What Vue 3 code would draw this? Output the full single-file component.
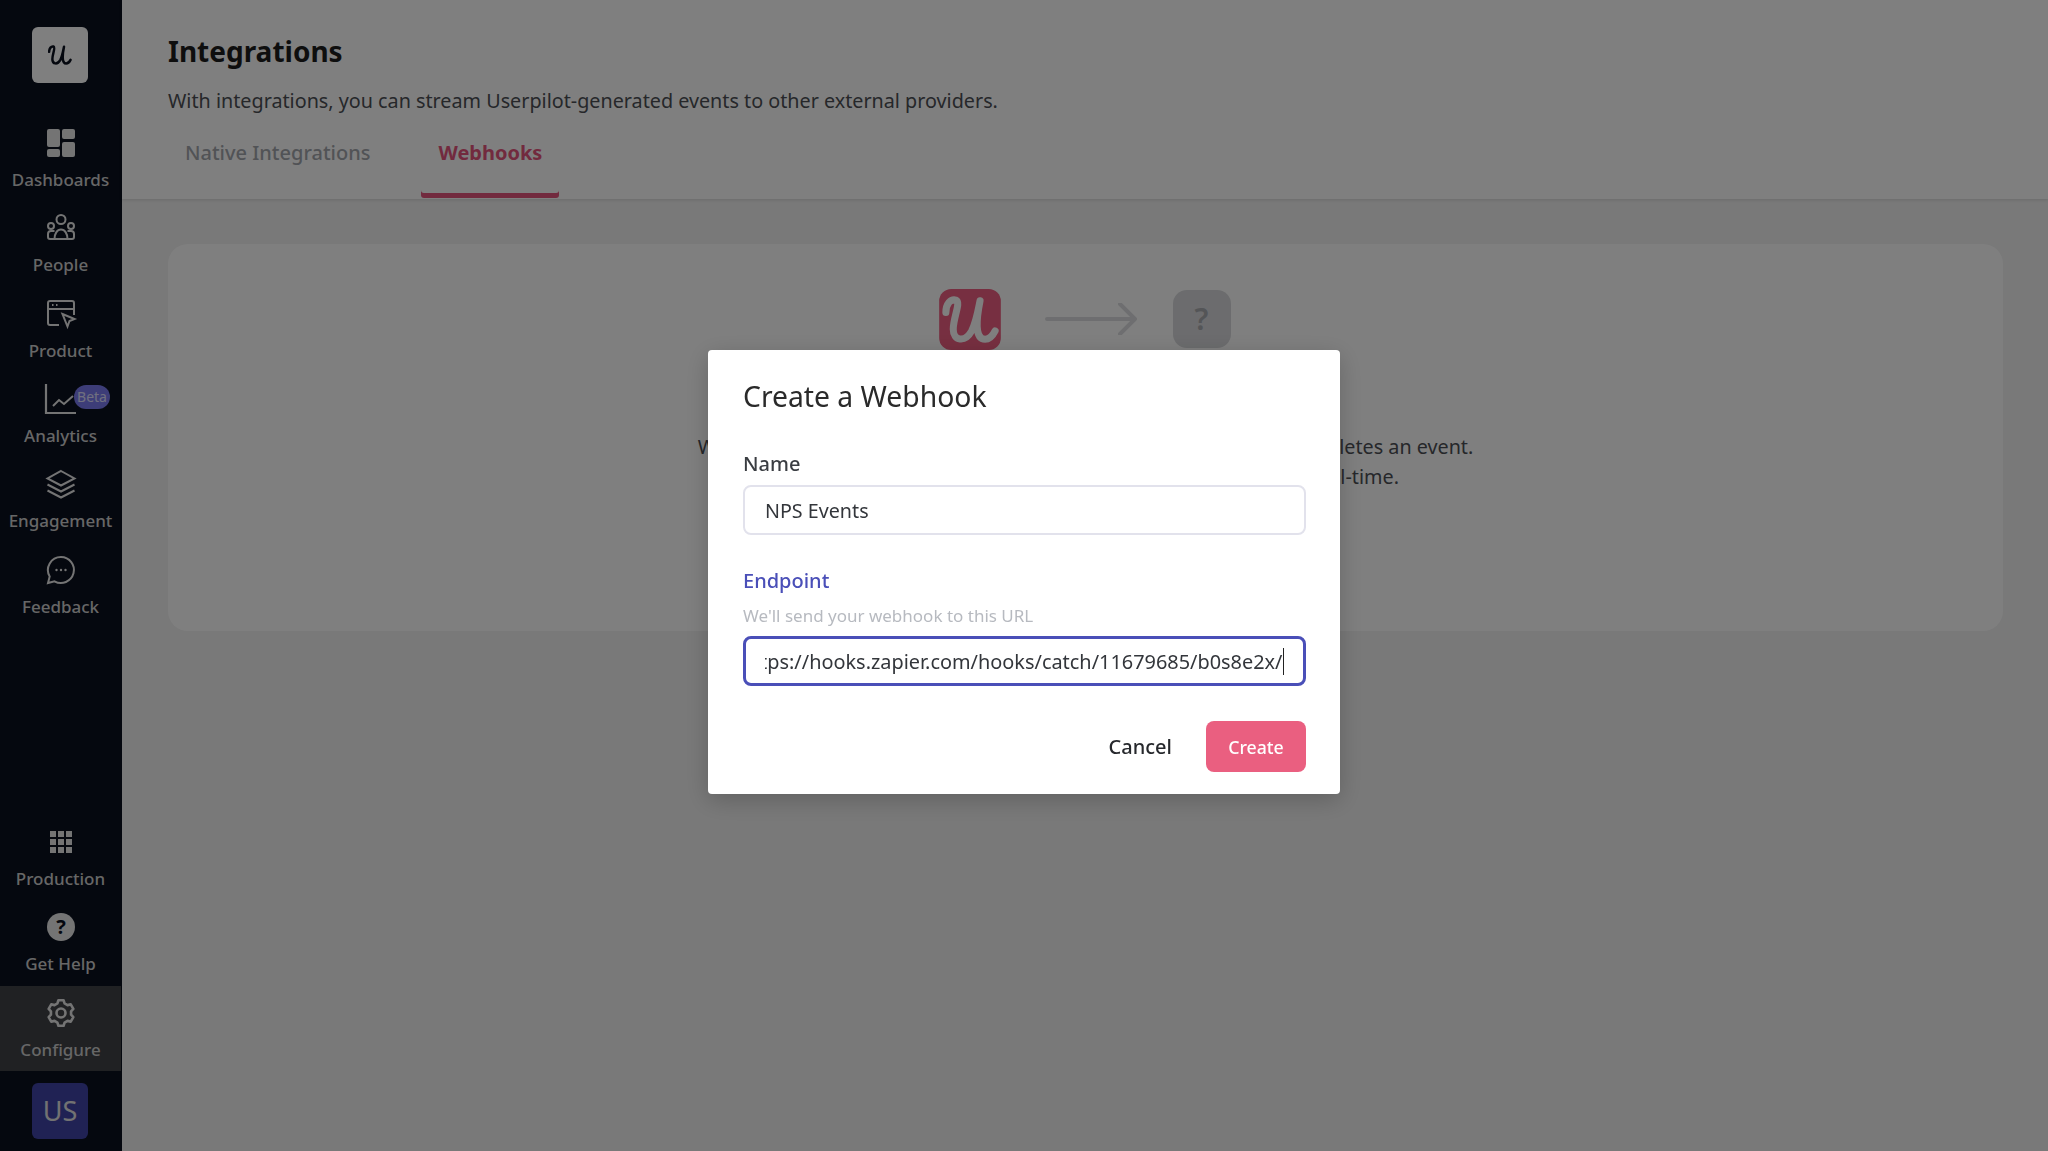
<script setup>
const uPath = 'M48 85 C48 60 62 44 78 48 C94 54 70 100 70 135 C70 170 105 176 125 140 C138 115 144 80 150 50 C140 100 132 165 165 165 C180 165 190 150 195 140'

function gearPath() {
  const pts = []
  for (let k = 0; k < 6; k++) {
    const a = (-90 + k * 60) * Math.PI / 180
    for (const [r, d] of [[10.2, -0.36], [13, -0.2], [13, 0.2], [10.2, 0.36]]) {
      pts.push((14 + r * Math.cos(a + d)).toFixed(2) + ' ' + (14 + r * Math.sin(a + d)).toFixed(2))
    }
  }
  return 'M' + pts.join('L') + 'Z'
}

const topItems = [
  {
    label: 'Dashboards',
    icon: '<g fill="currentColor" stroke="none"><rect x="0" y="0" width="13" height="18" rx="2"/><rect x="0" y="20" width="13" height="8" rx="2"/><rect x="15" y="0" width="13" height="10" rx="2"/><rect x="15" y="13" width="13" height="15" rx="2"/></g>'
  },
  {
    label: 'People',
    icon: '<circle cx="14" cy="5.5" r="4.5"/><circle cx="4" cy="12" r="3"/><circle cx="24" cy="12" r="3"/><path d="M7.5 25C7.5 20 10 15.5 14 15.5S20.500 20 20.500 25Z"/><path d="M7.500 17H4Q1 17 1 20V23Q1 25 3 25H25Q27 25 27 23V20Q27 17 24 17H20.500"/>'
  },
  {
    label: 'Product',
    icon: '<path d="M12 25H3Q1 25 1 23V3Q1 1 3 1H25Q27 1 27 3V15"/><path d="M1 9H27"/><path d="M5 5H6.500M9 5H10.500"/><path d="M15.500 14L27.500 19L22.500 21L20.500 26.500Z"/>'
  },
  {
    label: 'Analytics',
    badge: 'Beta',
    icon: '<path d="M-1 -1V28H29" stroke-width="2.200"/><path d="M6 21L12 15L17 19L26 11"/>'
  },
  {
    label: 'Engagement',
    icon: '<path d="M14 1L27.500 8.500L14 15.500L0.500 8.500Z"/><path d="M0.500 14.500L14 21.500L27.500 14.500"/><path d="M0.500 20.500L14 27.500L27.500 20.500"/>'
  },
  {
    label: 'Feedback',
    icon: '<path d="M14 1A13 13 0 1 1 7.500 25.300L1 27L2.700 20.500A13 13 0 0 1 14 1Z"/><g fill="currentColor" stroke="none"><circle cx="9.500" cy="14" r="1.200"/><circle cx="14" cy="14" r="1.200"/><circle cx="18.500" cy="14" r="1.200"/></g>'
  }
]

const bottomItems = [
  {
    label: 'Production',
    icon: '<g fill="currentColor" stroke="none"><rect x="3" y="3" width="6" height="6"/><rect x="11" y="3" width="6" height="6"/><rect x="19" y="3" width="6" height="6"/><rect x="3" y="11" width="6" height="6"/><rect x="11" y="11" width="6" height="6"/><rect x="19" y="11" width="6" height="6"/><rect x="3" y="19" width="6" height="6"/><rect x="11" y="19" width="6" height="6"/><rect x="19" y="19" width="6" height="6"/></g>'
  },
  {
    label: 'Get Help',
    icon: '<circle cx="14" cy="14" r="14" fill="currentColor" stroke="none"/><text x="14" y="21" text-anchor="middle" font-size="20" font-weight="700" fill="#0a101e" stroke="none" font-family="Noto Sans, sans-serif">?</text>'
  },
  {
    label: 'Configure',
    active: true,
    icon: '<path d="' + gearPath() + '" stroke-linejoin="round" stroke-width="2.600"/><circle cx="14" cy="14" r="4.500" stroke-width="2.600"/>'
  }
]
</script>

<template>
  <div class="page">
    <aside class="sidebar">
      <div class="logo">
        <svg width="24" height="21" viewBox="40 40 165 140">
          <path :d="uPath" fill="none" stroke="#0a101e" stroke-width="17" stroke-linecap="round" stroke-linejoin="round" />
        </svg>
      </div>
      <a v-for="item in topItems" :key="item.label" class="nav-item">
        <svg class="nav-icon" viewBox="0 0 28 28" fill="none" stroke="currentColor" stroke-width="2" v-html="item.icon"></svg>
        <span class="nav-label">{{ item.label }}</span>
        <span v-if="item.badge" class="badge">{{ item.badge }}</span>
      </a>
      <div class="sidebar-bottom">
        <a v-for="item in bottomItems" :key="item.label" class="nav-item" :class="{ active: item.active }">
          <svg class="nav-icon" viewBox="0 0 28 28" fill="none" stroke="currentColor" stroke-width="2" v-html="item.icon"></svg>
          <span class="nav-label">{{ item.label }}</span>
        </a>
        <div class="avatar">US</div>
      </div>
    </aside>

    <main class="content">
      <header class="header">
        <h1>Integrations</h1>
        <p>With integrations, you can stream Userpilot-generated events to other external providers.</p>
        <nav class="tabs">
          <a class="tab">Native Integrations</a>
          <a class="tab selected">Webhooks</a>
        </nav>
      </header>

      <section class="card">
        <div class="flow">
          <svg class="flow-logo" viewBox="28 15 184 182">
            <rect x="28" y="15" width="184" height="182" rx="36" fill="#ee5f82" />
            <path :d="uPath" fill="none" stroke="#fff" stroke-width="21" stroke-linecap="round" stroke-linejoin="round" />
          </svg>
          <svg class="flow-arrow" viewBox="0 0 92 32" fill="none" stroke="#dcdde0" stroke-width="4" stroke-linecap="round" stroke-linejoin="round">
            <path d="M2 16H90M75 1L90 16L75 31" />
          </svg>
          <div class="unknown">?</div>
        </div>
        <p class="card-text">Webhooks send data to your external services each time a user completes an event.<br />Your endpoint will receive the event details and its data in real-time.</p>
      </section>
    </main>

    <div class="overlay">
      <div class="modal">
        <h2>Create a Webhook</h2>
        <label class="field-label first">Name</label>
        <div class="input">NPS Events</div>
        <label class="field-label focused">Endpoint</label>
        <div class="hint">We'll send your webhook to this URL</div>
        <div class="input focus">
          <div class="input-clip">
            <span class="url">https://hooks.zapier.com/hooks/catch/11679685/b0s8e2x/</span>
            <span class="caret"></span>
          </div>
        </div>
        <div class="actions">
          <button class="cancel">Cancel</button>
          <button class="create">Create</button>
        </div>
      </div>
    </div>
  </div>
</template>

<style scoped>
.page {
  display: flex;
  min-height: 1151px;
  background: #f2f2f2;
  font-family: "Noto Sans", "Open Sans", sans-serif;
  color: #222;
}

.sidebar {
  width: 122px;
  height: 1151px;
  flex: none;
  display: flex;
  flex-direction: column;
  background: #0a101e;
  padding-top: 27px;
  box-sizing: border-box;
}

.logo {
  width: 56px;
  height: 56px;
  margin: 0 0 33px 32px;
  border-radius: 6px;
  background: #fff;
  display: flex;
  align-items: center;
  justify-content: center;
}

.nav-item {
  position: relative;
  height: 85.33px;
  width: 121px;
  flex: none;
  display: flex;
  flex-direction: column;
  align-items: center;
  padding-top: 13px;
  box-sizing: border-box;
  color: #e8e8e8;
}

.nav-item.active {
  background: #404347;
}

.nav-icon {
  width: 28px;
  height: 28px;
  overflow: visible;
}

.nav-label {
  margin-top: 10px;
  font-size: 17px;
  line-height: 26px;
  font-weight: 500;
  white-space: nowrap;
  color: #cfcfcf;
}

.badge {
  position: absolute;
  left: 74px;
  top: 13px;
  width: 36px;
  height: 24px;
  border-radius: 12px;
  background: #7a7af0;
  color: #e0e0ff;
  font-size: 14px;
  line-height: 24px;
  text-align: center;
}

.sidebar-bottom {
  margin-top: auto;
  display: flex;
  flex-direction: column;
  padding-bottom: 12px;
}

.avatar {
  width: 56px;
  height: 56px;
  margin: 12px 0 0 32px;
  border-radius: 6px;
  background: #4045a8;
  color: #e4e4e4;
  font-size: 27px;
  line-height: 56px;
  text-align: center;
}

.content {
  flex: 1;
  min-width: 0;
}

.header {
  height: 199px;
  box-sizing: border-box;
  padding: 30px 0 0 46px;
  background: #fff;
  box-shadow: 0 1px 3px rgba(0, 0, 0, 0.12);
}

h1 {
  margin: 0;
  font-size: 28px;
  line-height: 42px;
  font-weight: 700;
  color: #1d1d1d;
}

.header p {
  margin: 14px 0 0;
  font-size: 19.75px;
  line-height: 30px;
  color: #4c4f55;
}

.tabs {
  display: flex;
  gap: 34px;
  margin-top: 20px;
}

.tab {
  padding: 0 17px;
  height: 62px;
  box-sizing: border-box;
  font-size: 20px;
  line-height: 34px;
  font-weight: 500;
  color: #a3a6ac;
  border-radius: 0 0 3px 3px;
}

.tab.selected {
  font-weight: 700;
  color: #e4557c;
  box-shadow: inset 0 -5px 0 #e4557c;
}

.card {
  margin: 45px 45px 0 46px;
  height: 387px;
  box-sizing: border-box;
  padding-top: 45px;
  background: #fff;
  border-radius: 20px;
}

.flow {
  display: flex;
  align-items: center;
  justify-content: center;
  height: 60px;
  gap: 36px;
  padding-right: 2px;
}

.flow-logo {
  width: 62px;
  height: 61px;
}

.flow-arrow {
  width: 92px;
  height: 32px;
  margin-left: 8px;
}

.unknown {
  width: 58px;
  height: 58px;
  border-radius: 14px;
  background: #d8d9dc;
  color: #a8aaaf;
  font-size: 30px;
  line-height: 58px;
  font-weight: 600;
  text-align: center;
}

.card-text {
  margin: 83px 0 0;
  font-size: 19.75px;
  line-height: 30px;
  text-align: center;
  color: #4c4f55;
}

.overlay {
  position: fixed;
  inset: 0;
  display: flex;
  justify-content: center;
  align-items: flex-start;
  padding-top: 350px;
  box-sizing: border-box;
  background: rgba(0, 0, 0, 0.5);
}

.modal {
  width: 632px;
  height: 444px;
  box-sizing: border-box;
  padding: 26px 34px 0 35px;
  background: #fff;
  border-radius: 4px;
  box-shadow: 0 6px 24px rgba(0, 0, 0, 0.2);
}

h2 {
  margin: 0;
  font-size: 28.3px;
  line-height: 40px;
  font-weight: 400;
  color: #2a2a2a;
}

.field-label {
  display: block;
  margin-top: 34px;
  font-size: 20px;
  line-height: 24px;
  font-weight: 500;
  color: #3a3d42;
}

.field-label.first {
  margin-top: 36px;
}

.field-label.focused {
  color: #4a4fb8;
}

.hint {
  margin-top: 13px;
  font-size: 17px;
  line-height: 20px;
  color: #b7bac0;
}

.input {
  margin-top: 9px;
  height: 50px;
  box-sizing: border-box;
  border: 2px solid #e2e2ec;
  border-radius: 8px;
  padding: 0 20px;
  font-size: 19.7px;
  line-height: 47px;
  color: #33363b;
}

.input.focus {
  margin-top: 10px;
  border: 3px solid #4a4fb8;
  padding: 0 19px;
  line-height: 45px;
}

.input-clip {
  display: flex;
  justify-content: flex-end;
  overflow: hidden;
  white-space: nowrap;
  position: relative;
}

.url {
  flex: none;
  font-size: 19.9px;
}

.caret {
  flex: none;
  width: 1.5px;
  height: 27px;
  margin-top: 9px;
  background: #222;
}

.actions {
  display: flex;
  justify-content: flex-end;
  align-items: center;
  gap: 34px;
  margin-top: 35px;
}

button {
  font-family: inherit;
  border: none;
  background: none;
  padding: 0;
  cursor: pointer;
}

.cancel {
  font-size: 20px;
  font-weight: 500;
  color: #26282c;
}

.create {
  width: 100px;
  height: 51px;
  border-radius: 8px;
  background: #ea5f80;
  color: #fff;
  font-size: 17.7px;
  font-weight: 500;
}
</style>
